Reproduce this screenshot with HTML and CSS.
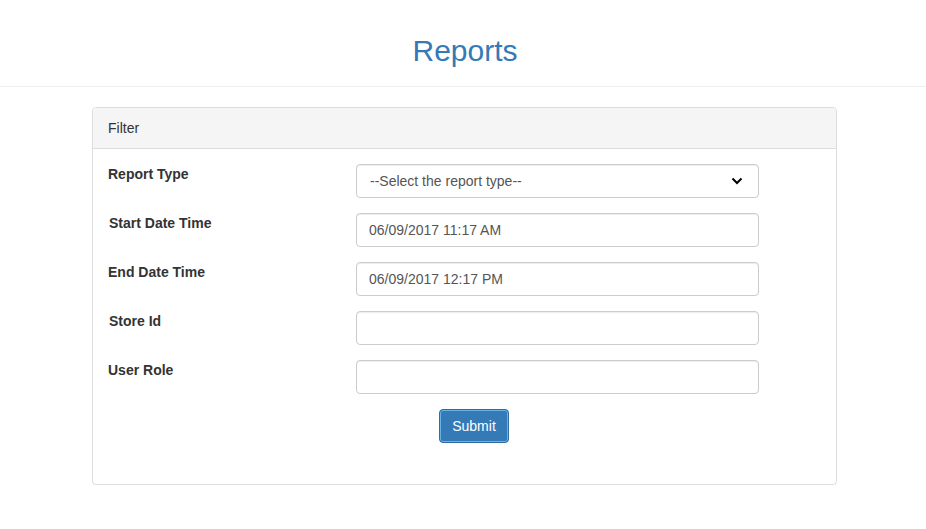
FILE: index.html
```html
<!DOCTYPE html>
<html>
<head>
<meta charset="utf-8">
<link rel="stylesheet" href="styles.css">
</head>
<body>
<header class="page-header">
  <h2 class="title">Reports</h2>
</header>
<main class="container">
  <section class="panel">
    <div class="panel-heading">Filter</div>
    <form class="panel-body">
      <div class="form-row">
        <label class="label">Report Type</label>
        <div class="control select">
          <span>--Select the report type--</span>
          <svg class="chev" width="12" height="8" viewBox="0 0 12 8"><path d="M1.5 1.5 L6 6 L10.5 1.5" fill="none" stroke="#000" stroke-width="2"/></svg>
        </div>
      </div>
      <div class="form-row">
        <label class="label shift">Start Date Time</label>
        <div class="control">06/09/2017 11:17 AM</div>
      </div>
      <div class="form-row">
        <label class="label">End Date Time</label>
        <div class="control">06/09/2017 12:17 PM</div>
      </div>
      <div class="form-row">
        <label class="label shift">Store Id</label>
        <div class="control"></div>
      </div>
      <div class="form-row">
        <label class="label">User Role</label>
        <div class="control"></div>
      </div>
      <div class="form-row actions">
        <span></span>
        <div><button type="button" class="btn">Submit</button></div>
      </div>
    </form>
  </section>
</main>
</body>
</html>
```
FILE: styles.css
```css
html, body {
  margin: 0;
  padding: 0;
  background: #fff;
  font-family: "Liberation Sans", Arial, sans-serif;
  font-size: 14px;
  line-height: 20px;
  color: #333;
}
.page-header {
  height: 86px;
  border-bottom: 1px solid #eee;
  display: flex;
  align-items: center;
  justify-content: center;
}
.title {
  margin: 0;
  padding-top: 14px;
  font-size: 30px;
  font-weight: normal;
  line-height: 33px;
  color: #337ab7;
  padding-left: 4px;
}
.container {
  padding: 20px 90px 0 92px;
}
.panel {
  width: 743px;
  border: 1px solid #ddd;
  border-radius: 4px;
  box-shadow: 0 1px 1px rgba(0,0,0,.05);
}
.panel-heading {
  height: 41px;
  box-sizing: border-box;
  padding: 10px 15px;
  background: #f5f5f5;
  border-bottom: 1px solid #ddd;
  border-radius: 3px 3px 0 0;
}
.panel-body {
  margin: 0;
  padding: 15px 15px 41px 15px;
  display: flex;
  flex-direction: column;
  gap: 15px;
}
.form-row {
  display: grid;
  grid-template-columns: 248px 403px;
}
.label {
  font-weight: bold;
  padding-top: 0;
}
.label.shift {
  padding-left: 1px;
}
.control {
  height: 34px;
  box-sizing: border-box;
  border: 1px solid #ccc;
  border-radius: 4px;
  padding: 6px 12px;
  color: #555;
  box-shadow: inset 0 1px 1px rgba(0,0,0,.075);
}
.select {
  display: flex;
  align-items: center;
  justify-content: space-between;
  padding: 6px 15px 6px 13px;
}
.chev {
  display: block;
}
.actions div {
  padding-left: 83px;
}
.btn {
  height: 34px;
  box-sizing: border-box;
  padding: 6px 12px;
  font-family: inherit;
  font-size: 14px;
  line-height: 20px;
  color: #fff;
  background: #337ab7;
  border: 1px solid #2e6da4;
  border-radius: 4px;
  box-shadow: 0 0 0 1px #66b3e6 inset;
  width: 70px;
}
```
